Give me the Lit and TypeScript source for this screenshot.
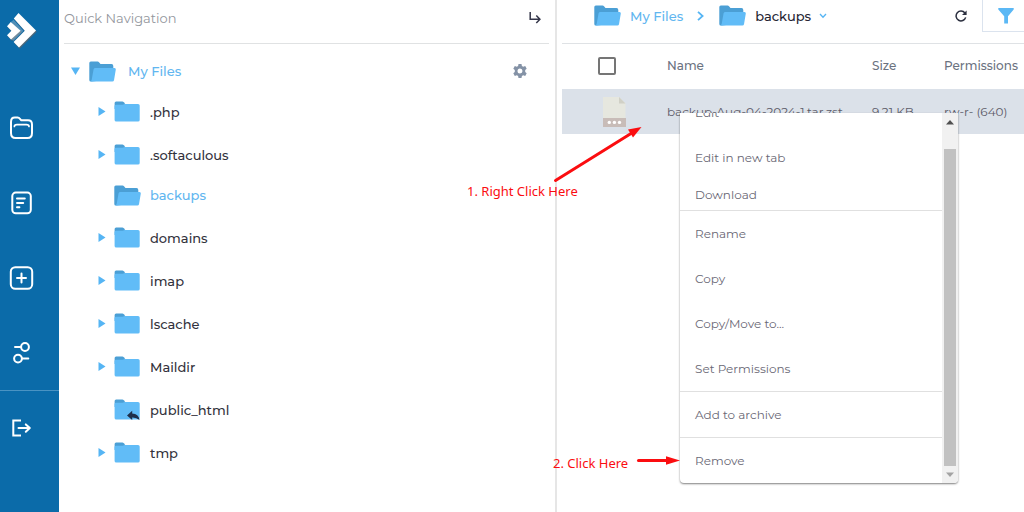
import { LitElement, html, css, svg } from "lit";
import { customElement, property } from "lit/decorators.js";
import { classMap } from "lit/directives/class-map.js";

type FolderKind = "closed" | "open" | "link";

interface TreeItem {
  name: string;
  kind: FolderKind;
  expandable: boolean;
}

interface MenuEntry {
  label: string;
  compact?: boolean;
  divided?: boolean;
}

const TREE: TreeItem[] = [
  { name: ".php", kind: "closed", expandable: true },
  { name: ".softaculous", kind: "closed", expandable: true },
  { name: "backups", kind: "open", expandable: false },
  { name: "domains", kind: "closed", expandable: true },
  { name: "imap", kind: "closed", expandable: true },
  { name: "lscache", kind: "closed", expandable: true },
  { name: "Maildir", kind: "closed", expandable: true },
  { name: "public_html", kind: "link", expandable: false },
  { name: "tmp", kind: "closed", expandable: true },
];

const MENU: MenuEntry[] = [
  { label: "Edit" },
  { label: "Edit in new tab" },
  { label: "Download", compact: true },
  { label: "Rename", divided: true },
  { label: "Copy" },
  { label: "Copy/Move to..." },
  { label: "Set Permissions" },
  { label: "Add to archive", divided: true },
  { label: "Remove", divided: true },
];

const reset = css`
  :host {
    box-sizing: border-box;
    font-family: Montserrat, Inter, "Noto Sans", sans-serif;
  }
  *,
  *::before,
  *::after {
    box-sizing: border-box;
  }
  button {
    display: flex;
    align-items: center;
    padding: 0;
    border: 0;
    background: none;
    color: inherit;
    font: inherit;
    text-align: left;
    cursor: pointer;
  }
  a {
    color: inherit;
    text-decoration: none;
  }
  ul {
    margin: 0;
    padding: 0;
    list-style: none;
  }
  svg {
    display: block;
    flex: none;
  }
`;

@customElement("folder-icon")
export class FolderIcon extends LitElement {
  @property() kind: FolderKind = "closed";

  static styles = css`
    :host {
      display: block;
      flex: none;
    }
    svg {
      display: block;
    }
  `;

  render() {
    if (this.kind === "open") {
      return html`<svg width="27" height="21" viewBox="0 0 27 21" aria-hidden="true">
        <path d="M.3 2Q.3.5 1.8.5H8.6Q9.5.5 10 1.2L11.5 3H22.5Q24.3 3 24.3 5V18L3 20.5H1.8Q.3 20.5 .3 19Z" fill="#4b9fd5" />
        <path d="M4.6 8.3Q5 7 6.3 7H25.5Q27 7 26.8 8.5L25 19.2Q24.7 20.6 23.4 20.6H1.4L2.6 19.3Z" fill="#61bcf7" />
      </svg>`;
    }
    return html`<svg width="27" height="21" viewBox="0 0 27 21" aria-hidden="true">
      <path d="M.6 8V2Q.6.5 2.1.5H8.4Q9.2.5 9.8 1.2L11.4 3.2V8Z" fill="#4b9fd5" />
      <path d="M.6 5Q.8 3.9 2.3 3.8H8.6L11 3H24Q25.7 3 25.7 4.6V19Q25.7 20.6 24 20.6H2.3Q.6 20.6 .6 19Z" fill="#61bcf7" />
      ${this.kind === "link"
        ? svg`<path d="M18.2 11.8V14.6Q24.6 15 25.6 21Q22.4 18.2 18.2 18.4V21L13 16.4Z" fill="#1f2f49" />`
        : null}
    </svg>`;
  }
}

@customElement("side-rail")
export class SideRail extends LitElement {
  static styles = [
    reset,
    css`
      :host {
        display: block;
        background: #0b6ba9;
        color: #fff;
      }
      .logo {
        display: block;
        height: 90px;
        padding: 12px 0 0 6px;
      }
      .item {
        width: 100%;
        height: 75px;
        padding-left: 9px;
      }
      .exit {
        border-top: 1px solid #4a93c3;
      }
      svg.icon {
        fill: none;
        stroke: currentColor;
        stroke-width: 2;
        stroke-linecap: round;
        stroke-linejoin: round;
      }
    `,
  ];

  render() {
    const mark = svg`
      <path d="M12.5 1 30 18.6 13 35.6 7.6 30 18.8 18.7 7.8 6.5Z" />
      <path d="M4.8 10 14.6 18.8 5 27.6 1 23.2 5.4 18.8 1 14.3Z" />
      <path d="M4.8 10 7.6 7.8 17.4 18.8 7.6 28.8 5 27.6 14 18.8Z" opacity=".25" />
    `;
    return html`
      <a class="logo" href="#home" aria-label="Home">
        <svg width="32" height="38" viewBox="0 0 32 38">
          <g fill="#59656f" opacity=".8" transform="translate(.8 1.2)">${mark}</g>
          <g fill="#fff">${mark}</g>
        </svg>
      </a>
      <button class="item" aria-label="Files">
        <svg class="icon" width="25" height="24" viewBox="0 0 25 24">
          <path d="M2 6Q2 1.6 5.8 1.6H8.6Q10 1.6 11 2.8L12.3 4.3H19Q23 4.3 23 8.5V17Q23 22 18.5 22H6.5Q2 22 2 17Z" />
          <path d="M5.4 10.5Q5.4 8.6 8 8.6H17.5Q20 8.6 20 10.5" stroke-width="1.7" />
        </svg>
      </button>
      <button class="item" aria-label="Documents">
        <svg class="icon" width="25" height="24" viewBox="0 0 25 24">
          <rect x="3.3" y="1.6" width="18.5" height="20.6" rx="3.5" />
          <path d="M8 7.5H15.8M8 12H14.2M8 16.3H10.4" />
        </svg>
      </button>
      <button class="item" aria-label="Create">
        <svg class="icon" width="25" height="24" viewBox="0 0 25 24">
          <rect x="1.8" y="1.2" width="21.4" height="21.6" rx="4.5" />
          <path d="M12.5 7.5V16.5M8 12H17" />
        </svg>
      </button>
      <button class="item" aria-label="Settings">
        <svg class="icon" width="25" height="24" viewBox="0 0 25 24">
          <circle cx="16" cy="6" r="3.9" />
          <path d="M6 6H12M13 17.6H19.3" />
          <circle cx="9" cy="17.6" r="3.9" />
        </svg>
      </button>
      <button class="item exit" aria-label="Log out">
        <svg class="icon" width="25" height="24" viewBox="0 0 25 24">
          <path d="M12 4.6H4.3V19.6H12" stroke-linecap="butt" stroke-linejoin="miter" />
          <path d="M9.5 12.1H20.5M16.8 8.4 20.8 12.1 16.8 15.8" />
        </svg>
      </button>
    `;
  }
}

@customElement("quick-navigation")
export class QuickNavigation extends LitElement {
  static styles = [
    reset,
    css`
      :host {
        display: block;
        padding: 0 6px 0 5px;
        border-right: 2px solid #e6e6e6;
        color: #33323c;
        font-size: 13px;
        font-weight: 500;
        line-height: 20px;
      }
      .head {
        display: flex;
        justify-content: space-between;
        align-items: center;
        height: 44px;
        padding: 0 8px 8px 0;
        border-bottom: 1px solid #e0e2e3;
      }
      h2 {
        margin: 0;
        color: #93969d;
        font-size: 13px;
        font-weight: 400;
      }
      .root,
      .row {
        display: flex;
        align-items: center;
      }
      .root {
        height: 38px;
        margin-top: 8px;
        padding: 0 22px 0 7px;
        color: #61b6f0;
      }
      .root .toggle {
        width: 18px;
      }
      .root .name {
        flex: 1;
        margin-left: 12px;
      }
      .row {
        height: 43px;
        padding-left: 34px;
      }
      .row.active {
        height: 40px;
        padding-bottom: 2px;
        color: #61b6f0;
      }
      .toggle {
        width: 16px;
        height: 20px;
        flex: none;
      }
      .row .name {
        margin-left: 9px;
      }
    `,
  ];

  render() {
    return html`
      <header class="head">
        <h2>Quick Navigation</h2>
        <button aria-label="Collapse panel">
          <svg width="12" height="12" viewBox="0 0 12 12" fill="none" stroke="#35374a" stroke-width="1.5">
            <path d="M1.2 0V7.3H10.5M7.3 3.6 10.9 7.3 7.3 11" />
          </svg>
        </button>
      </header>
      <nav aria-label="Folders">
        <div class="root">
          <button class="toggle" aria-label="Collapse My Files">
            <svg width="9" height="8" viewBox="0 0 9 8"><path d="M0 .5H9L4.5 8Z" fill="#56b5f4" /></svg>
          </button>
          <folder-icon kind="open"></folder-icon>
          <a class="name" href="#files">My Files</a>
          <button aria-label="Tree settings">
            <svg width="14" height="14" viewBox="0 0 14 14" fill="#8492a6">
              <path
                fill-rule="evenodd"
                d="M5.5 0H8.5L8.9 2 10.2 2.8 12.2 2.1 13.7 4.7 12.2 6V8L13.7 9.3 12.2 11.9 10.2 11.2 8.9 12 8.5 14H5.5L5.1 12 3.8 11.2 1.8 11.9.3 9.3 1.8 8V6L.3 4.7 1.8 2.1 3.8 2.8 5.1 2ZM7 4.5A2.5 2.5 0 1 0 7 9.5 2.5 2.5 0 0 0 7 4.5Z"
              />
            </svg>
          </button>
        </div>
        <ul>
          ${TREE.map(
            (item) => html`<li class=${classMap({ row: true, active: item.kind === "open" })}>
              ${item.expandable
                ? html`<button class="toggle" aria-label="Expand ${item.name}">
                    <svg width="8" height="9" viewBox="0 0 8 9"><path d="M.5 0V9L7.5 4.5Z" fill="#56b5f4" /></svg>
                  </button>`
                : html`<span class="toggle"></span>`}
              <folder-icon kind=${item.kind}></folder-icon>
              <a class="name" href="#${item.name}">${item.name}</a>
            </li>`
          )}
        </ul>
      </nav>
    `;
  }
}

@customElement("context-menu")
export class ContextMenu extends LitElement {
  static styles = [
    reset,
    css`
      :host {
        display: flex;
        overflow: hidden;
        border-radius: 0 0 4px 4px;
        background: #fff;
        box-shadow: 0 1px 2px rgba(0, 0, 0, 0.5);
        color: #6a6875;
        font-size: 12px;
        line-height: 16px;
      }
      .list {
        display: flex;
        flex: 1;
        flex-direction: column;
        justify-content: flex-end;
      }
      .item {
        width: 100%;
        height: 45px;
        padding-left: 15px;
      }
      .compact .item {
        height: 30px;
      }
      .divided {
        border-top: 1px solid #e0e0e0;
      }
      .bar {
        display: flex;
        flex-direction: column;
        align-items: center;
        width: 16px;
        padding: 7px 0 6px;
        background: #f1f1f1;
      }
      .thumb {
        flex: 1;
        width: 12px;
        margin: 24px 0 6px;
        background: #c1c1c1;
      }
    `,
  ];

  render() {
    return html`
      <ul class="list" role="menu">
        ${MENU.map(
          (entry) => html`<li
            role="none"
            class=${classMap({ compact: !!entry.compact, divided: !!entry.divided })}
          >
            <button class="item" role="menuitem">${entry.label}</button>
          </li>`
        )}
      </ul>
      <div class="bar" aria-hidden="true">
        <svg width="8" height="5" viewBox="0 0 8 5"><path d="M0 4.5 4 0 8 4.5Z" fill="#505050" /></svg>
        <div class="thumb"></div>
        <svg width="8" height="5" viewBox="0 0 8 5"><path d="M0 .5 4 5 8 .5Z" fill="#a3a3a3" /></svg>
      </div>
    `;
  }
}

@customElement("file-browser")
export class FileBrowser extends LitElement {
  static styles = [
    reset,
    css`
      :host {
        display: block;
        min-width: 0;
        padding-left: 5px;
      }
      .head {
        display: flex;
        align-items: flex-start;
        height: 44px;
        padding-left: 32px;
        border-bottom: 1px solid #dfe2e5;
      }
      .crumbs {
        display: flex;
        flex: 1;
        align-items: center;
        height: 31px;
        color: #61b6f0;
        font-size: 13px;
        font-weight: 500;
        line-height: 20px;
      }
      .crumb {
        display: flex;
        align-items: center;
        gap: 9px;
      }
      .sep {
        margin: 0 15px 0 14px;
      }
      .current {
        color: #262533;
      }
      .down {
        margin-left: 8px;
      }
      .refresh {
        height: 31px;
        margin-right: 15px;
      }
      .filter {
        width: 42px;
        height: 32px;
        padding-left: 15px;
        border: solid #dbe3ee;
        border-width: 0 0 1px 1px;
      }
      table {
        width: 100%;
        border-collapse: collapse;
        table-layout: fixed;
        color: #5c5b68;
        font-size: 12px;
        line-height: 16px;
      }
      th,
      td {
        height: 45px;
        padding: 0;
        font-weight: 400;
        text-align: left;
        white-space: nowrap;
      }
      th {
        padding-bottom: 1px;
        color: #6b7280;
        font-weight: 500;
      }
      .pick {
        width: 105px;
        padding-left: 36px;
      }
      .size {
        width: 72px;
      }
      .perms {
        width: 80px;
      }
      td.pick {
        padding-left: 40px;
      }
      tbody tr {
        background: #dbe1e9;
      }
      input {
        display: block;
        width: 18px;
        height: 18px;
        margin: 0;
        border: 2px solid #757575;
        border-radius: 2px;
        background: #fff;
        appearance: none;
      }
    `,
  ];

  render() {
    return html`
      <header class="head">
        <nav class="crumbs" aria-label="Path">
          <a class="crumb" href="#files"><folder-icon kind="open"></folder-icon>My Files</a>
          <svg class="sep" width="7" height="10" viewBox="0 0 7 10" fill="none" stroke="#56b5f4" stroke-width="1.8">
            <path d="M1 .8 5.6 5 1 9.2" />
          </svg>
          <a class="crumb current" href="#backups"><folder-icon kind="open"></folder-icon>backups</a>
          <button class="down" aria-label="Folder actions">
            <svg width="8" height="6" viewBox="0 0 8 6" fill="none" stroke="#56b5f4" stroke-width="1.3">
              <path d="M1 1 4 4.3 7 1" />
            </svg>
          </button>
        </nav>
        <button class="refresh" aria-label="Refresh">
          <svg width="12" height="12" viewBox="0 0 12 12" fill="none" stroke="#2b2f3f" stroke-width="1.5">
            <path d="M9.9 3A4.9 4.9 0 1 0 10.7 7.4" />
            <path d="M11.6.4V5H7Z" fill="#2b2f3f" stroke="none" />
          </svg>
        </button>
        <button class="filter" aria-label="Filter">
          <svg width="16" height="16" viewBox="0 0 16 16">
            <path d="M.3 0H15.7V1.4L10 8.2V15.6H6.2V8.2L.3 1.4Z" fill="#5bb8f5" />
          </svg>
        </button>
      </header>
      <table>
        <thead>
          <tr>
            <th class="pick"><input type="checkbox" aria-label="Select all" /></th>
            <th>Name</th>
            <th class="size">Size</th>
            <th class="perms">Permissions</th>
          </tr>
        </thead>
        <tbody>
          <tr>
            <td class="pick">
              <svg width="24" height="30" viewBox="0 0 24 30">
                <path d="M1 0H17L23.5 6.5V21H1Z" fill="#e6e7df" />
                <path d="M17 0 23.5 6.5H17Z" fill="#d0d0c6" />
                <rect x="1" y="21" width="23" height="9" fill="#c8bcb8" />
                <g fill="#fff">
                  <circle cx="7.3" cy="25.4" r="1.7" />
                  <circle cx="12.4" cy="25.4" r="1.7" />
                  <circle cx="17.5" cy="25.4" r="1.7" />
                </g>
              </svg>
            </td>
            <td>backup-Aug-04-2024-1.tar.zst</td>
            <td>9.21 KB</td>
            <td>rw-r- (640)</td>
          </tr>
        </tbody>
      </table>
    `;
  }
}

@customElement("app-root")
export class AppRoot extends LitElement {
  static styles = [
    reset,
    css`
      :host {
        position: relative;
        display: grid;
        grid-template-columns: 59px 498fr 467fr;
        min-height: 100vh;
        overflow: hidden;
        background: #fff;
      }
      .files {
        position: relative;
        min-width: 0;
      }
      .menu {
        position: absolute;
        top: 113px;
        left: 123px;
        width: 278px;
        height: 370px;
      }
      .note {
        position: absolute;
        color: #fb0d10;
        font-family: "Noto Sans", sans-serif;
        font-size: 13px;
        line-height: 16px;
        white-space: nowrap;
      }
      .first {
        top: 183px;
        left: -90px;
      }
      .second {
        top: 455px;
        left: -4px;
      }
      .arrow {
        position: absolute;
        fill: #fb0d10;
        stroke: #fb0d10;
      }
      .arrow-first {
        top: 125px;
        left: -4px;
      }
      .arrow-second {
        top: 455px;
        left: 79px;
      }
    `,
  ];

  render() {
    return html`
      <side-rail></side-rail>
      <quick-navigation></quick-navigation>
      <main class="files">
        <file-browser></file-browser>
        <context-menu class="menu"></context-menu>
        <svg class="arrow arrow-first" width="90" height="58" viewBox="0 0 90 58">
          <path d="M2.5 55.5 78 8.6" stroke-width="3" stroke-linecap="round" />
          <path d="M88.5 2 80 12.4 75 4.6Z" stroke="none" />
        </svg>
        <span class="note first">1. Right Click Here</span>
        <svg class="arrow arrow-second" width="45" height="11" viewBox="0 0 45 11">
          <path d="M2.5 5.5H32" stroke-width="3" stroke-linecap="round" />
          <path d="M44 5.5 30 9.8V1.2Z" stroke="none" />
        </svg>
        <span class="note second">2. Click Here</span>
      </main>
    `;
  }
}
